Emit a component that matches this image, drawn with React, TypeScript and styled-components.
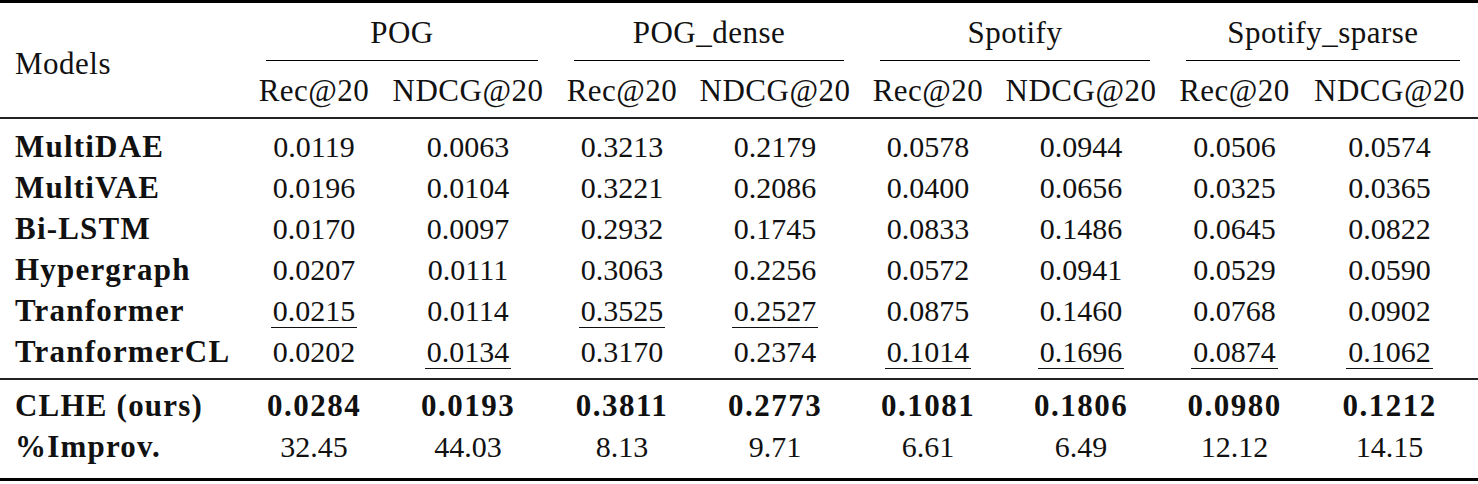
import React from "react";
import styled, { createGlobalStyle } from "styled-components";

const COLS = "248px 132px 176px 132px 174px 132px 174px 133px 177px";

const Global = createGlobalStyle`
  html, body { margin: 0; padding: 0; background: #fff; }
  body { font-family: "Liberation Serif", "Times New Roman", serif; color: #111; }
`;

const Table = styled.div`
  width: 1478px;
  font-size: 30px;
`;

const Header = styled.div`
  display: grid;
  grid-template-columns: ${COLS};
  grid-template-rows: auto auto;
  border-top: 3px solid #000;
  border-bottom: 2px solid #222;
  padding: 9px 0 5.5px;
  line-height: 41px;
  font-size: 31px;
  letter-spacing: 0.5px;
`;

const ModelsHead = styled.div`
  grid-row: 1 / span 2;
  grid-column: 1;
  align-self: center;
  padding-left: 15px;
  margin-top: 4px;
`;

const Group = styled.div`
  grid-row: 1;
  grid-column: span 2;
  display: flex;
  flex-direction: column;
  align-items: stretch;
  text-align: center;
`;

const CMidRule = styled.div`
  margin: 6.5px 18px 0;
  border-top: 1px solid #000;
`;

const SubHead = styled.div`
  grid-row: 2;
  text-align: center;
  padding-top: 9.5px;
`;

const Section = styled.div<{ $rule: number; $top: number; $bottom: number }>`
  padding: ${(p) => p.$top}px 0 ${(p) => p.$bottom}px;
  border-bottom: ${(p) => p.$rule}px solid ${(p) => (p.$rule > 2 ? "#000" : "#222")};
`;

const Row = styled.div`
  display: grid;
  grid-template-columns: ${COLS};
  line-height: 41px;
  height: 41px;
`;

const Name = styled.div`
  font-weight: 700;
  font-size: 31px;
  letter-spacing: 1.2px;
  padding-left: 15px;
  white-space: nowrap;
`;

const Value = styled.div<{ $bold?: boolean }>`
  text-align: center;
  font-weight: ${(p) => (p.$bold ? 700 : 400)};
  font-size: ${(p) => (p.$bold ? 31 : 30)}px;
  letter-spacing: ${(p) => (p.$bold ? 1.5 : 0)}px;
`;

const Under = styled.span`
  border-bottom: 1.5px solid #111;
  padding: 0 2px;
`;

type Cell = string;
const groups = ["POG", "POG_dense", "Spotify", "Spotify_sparse"];

const body: { name: string; vals: Cell[]; under: number[] }[] = [
  { name: "MultiDAE", vals: ["0.0119", "0.0063", "0.3213", "0.2179", "0.0578", "0.0944", "0.0506", "0.0574"], under: [] },
  { name: "MultiVAE", vals: ["0.0196", "0.0104", "0.3221", "0.2086", "0.0400", "0.0656", "0.0325", "0.0365"], under: [] },
  { name: "Bi-LSTM", vals: ["0.0170", "0.0097", "0.2932", "0.1745", "0.0833", "0.1486", "0.0645", "0.0822"], under: [] },
  { name: "Hypergraph", vals: ["0.0207", "0.0111", "0.3063", "0.2256", "0.0572", "0.0941", "0.0529", "0.0590"], under: [] },
  { name: "Tranformer", vals: ["0.0215", "0.0114", "0.3525", "0.2527", "0.0875", "0.1460", "0.0768", "0.0902"], under: [0, 2, 3] },
  { name: "TranformerCL", vals: ["0.0202", "0.0134", "0.3170", "0.2374", "0.1014", "0.1696", "0.0874", "0.1062"], under: [1, 4, 5, 6, 7] },
];

const ours = ["0.0284", "0.0193", "0.3811", "0.2773", "0.1081", "0.1806", "0.0980", "0.1212"];
const improv = ["32.45", "44.03", "8.13", "9.71", "6.61", "6.49", "12.12", "14.15"];

export default function App() {
  return (
    <>
      <Global />
      <Table>
        <Header>
          <ModelsHead>Models</ModelsHead>
          {groups.map((g) => (
            <Group key={g}>
              <span>{g}</span>
              <CMidRule />
            </Group>
          ))}
          {groups.map((g) => (
            <React.Fragment key={g + "-sub"}>
              <SubHead>Rec@20</SubHead>
              <SubHead>NDCG@20</SubHead>
            </React.Fragment>
          ))}
        </Header>
        <Section $top={7} $bottom={6} $rule={2}>
          {body.map((r) => (
            <Row key={r.name}>
              <Name>{r.name}</Name>
              {r.vals.map((v, i) => (
                <Value key={i}>{r.under.includes(i) ? <Under>{v}</Under> : v}</Value>
              ))}
            </Row>
          ))}
        </Section>
        <Section $top={5} $bottom={11} $rule={3}>
          <Row>
            <Name>CLHE (ours)</Name>
            {ours.map((v, i) => (
              <Value key={i} $bold>
                {v}
              </Value>
            ))}
          </Row>
          <Row>
            <Name>%Improv.</Name>
            {improv.map((v, i) => (
              <Value key={i}>{v}</Value>
            ))}
          </Row>
        </Section>
      </Table>
    </>
  );
}
